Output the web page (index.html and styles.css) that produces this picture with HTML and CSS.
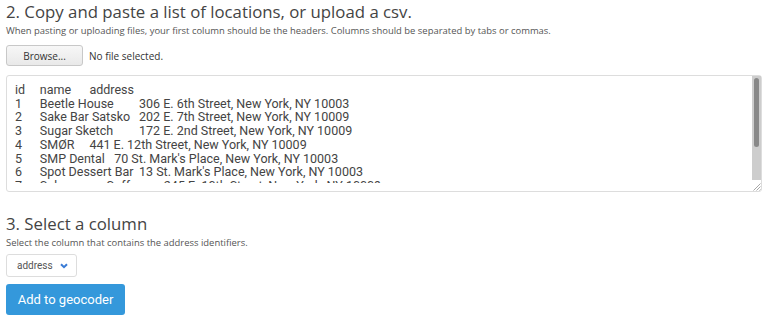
FILE: index.html
```html
<!DOCTYPE html>
<html>
<head>
<meta charset="utf-8">
<link rel="stylesheet" href="styles.css">
</head>
<body>
<div class="page">
  <section class="step">
    <h2 class="step-title">2. Copy and paste a list of locations, or upload a csv.</h2>
    <p class="step-help">When pasting or uploading files, your first column should be the headers. Columns should be separated by tabs or commas.</p>
    <div class="file-row">
      <span class="file-btn">Browse...</span>
      <span class="file-status">No file selected.</span>
    </div>
    <div class="paste-box">
      <textarea class="paste" spellcheck="false">id	name	address
1	Beetle House	306 E. 6th Street, New York, NY 10003
2	Sake Bar Satsko	202 E. 7th Street, New York, NY 10009
3	Sugar Sketch	172 E. 2nd Street, New York, NY 10009
4	SMØR	441 E. 12th Street, New York, NY 10009
5	SMP Dental	70 St. Mark's Place, New York, NY 10003
6	Spot Dessert Bar	13 St. Mark's Place, New York, NY 10003
7	Sobremesa Coffee	245 E. 10th Street, New York, NY 10009
8	Sunny &amp; Annie's	94 Avenue B, New York, NY 10009
9	Superiority Burger	430 E. 9th Street, New York, NY 10009</textarea>
      <div class="scrollbar"><div class="scroll-thumb"></div></div>
      <svg class="resizer" width="10" height="10" viewBox="0 0 10 10"><path d="M9.5 2.5 L2.5 9.5 M9.5 5.5 L5.5 9.5 M9.5 8.5 L8.5 9.5" stroke="#a8a8a8" stroke-width="1" fill="none"/></svg>
    </div>
  </section>
  <section class="step step-3">
    <h2 class="step-title">3. Select a column</h2>
    <p class="step-help">Select the column that contains the address identifiers.</p>
    <div class="select">
      <span class="select-value">address</span>
      <svg class="chev" width="8" height="6" viewBox="0 0 8 6"><path d="M1 1.2 L4 4.2 L7 1.2" fill="none" stroke="#3a7bd5" stroke-width="2"/></svg>
    </div>
    <button class="primary">Add to geocoder</button>
  </section>
</div>
</body>
</html>
```

FILE: styles.css
```css
html, body {
  margin: 0;
  padding: 0;
  background: #fff;
}
.page {
  padding: 0 6px;
  font-family: "Open Sans", sans-serif;
  color: #444;
}
.step-title {
  margin: 0;
  font-weight: 400;
  font-size: 16.8px;
  line-height: 24px;
  color: #444;
}
.step-help {
  margin: 0;
  font-size: 9.45px;
  line-height: 14px;
  color: #555;
}
.file-row {
  display: flex;
  align-items: center;
  gap: 6px;
  margin-top: 7px;
}
.file-btn {
  box-sizing: border-box;
  width: 77px;
  height: 21px;
  display: flex;
  align-items: center;
  justify-content: center;
  font-size: 10px;
  color: #333;
  border: 1px solid #c8c8c8;
  border-radius: 3px;
  background: linear-gradient(#f7f7f7, #e9e9e9);
}
.file-status {
  font-size: 10px;
  color: #333;
}
.paste-box {
  position: relative;
  box-sizing: border-box;
  height: 117px;
  margin-top: 9px;
  padding: 7px 8px 8px 8px;
  border: 1px solid #ddd;
  border-radius: 3px;
}
.paste {
  display: block;
  box-sizing: border-box;
  width: 100%;
  height: 100px;
  padding: 0;
  border: none;
  font-family: Roboto, sans-serif;
  font-size: 12.5px;
  line-height: 13.7px;
  color: #444;
  tab-size: 8;
  resize: none;
  overflow: hidden;
  outline: none;
}
.scrollbar {
  position: absolute;
  top: 0;
  right: 0;
  bottom: 11px;
  width: 9px;
  background: #cdcdcd;
}
.scroll-thumb {
  position: absolute;
  top: 2px;
  left: 2px;
  width: 5px;
  height: 69px;
  border-radius: 3px;
  background: #888;
}
.resizer {
  position: absolute;
  right: 0;
  bottom: 0;
}
.step-3 {
  margin-top: 20px;
}
.select {
  box-sizing: border-box;
  width: 71px;
  height: 23px;
  margin-top: 4px;
  display: flex;
  align-items: center;
  justify-content: space-between;
  padding: 0 8px 0 10px;
  border: 1px solid #ddd;
  border-radius: 3px;
  font-family: Roboto, sans-serif;
  font-size: 10px;
  color: #555;
}
.chev {
  flex-shrink: 0;
}
.primary {
  display: block;
  margin-top: 7px;
  box-sizing: border-box;
  width: 119px;
  height: 31px;
  border: none;
  border-radius: 3px;
  background: #3498db;
  color: #fff;
  font-family: Roboto, sans-serif;
  font-size: 13px;
}
```
